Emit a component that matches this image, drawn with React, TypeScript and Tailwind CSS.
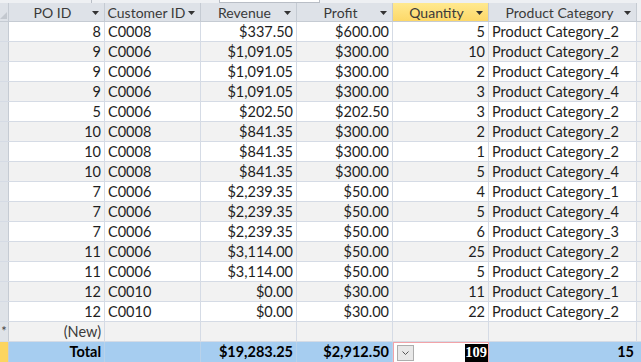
import React from "react";

const rows: [string, string, string, string, string, string][] = [
  ["8", "C0008", "$337.50", "$600.00", "5", "Product Category_2"],
  ["9", "C0006", "$1,091.05", "$300.00", "10", "Product Category_2"],
  ["9", "C0006", "$1,091.05", "$300.00", "2", "Product Category_4"],
  ["9", "C0006", "$1,091.05", "$300.00", "3", "Product Category_4"],
  ["5", "C0006", "$202.50", "$202.50", "3", "Product Category_2"],
  ["10", "C0008", "$841.35", "$300.00", "2", "Product Category_2"],
  ["10", "C0008", "$841.35", "$300.00", "1", "Product Category_2"],
  ["10", "C0008", "$841.35", "$300.00", "5", "Product Category_4"],
  ["7", "C0006", "$2,239.35", "$50.00", "4", "Product Category_1"],
  ["7", "C0006", "$2,239.35", "$50.00", "5", "Product Category_4"],
  ["7", "C0006", "$2,239.35", "$50.00", "6", "Product Category_3"],
  ["11", "C0006", "$3,114.00", "$50.00", "25", "Product Category_2"],
  ["11", "C0006", "$3,114.00", "$50.00", "5", "Product Category_2"],
  ["12", "C0010", "$0.00", "$30.00", "11", "Product Category_1"],
  ["12", "C0010", "$0.00", "$30.00", "22", "Product Category_2"],
];

const Arrow = () => (
  <svg width="7" height="4" viewBox="0 0 7 4" className="absolute right-[5px] top-[8px]">
    <path d="M0 0 H7 L3.5 4 Z" fill="#333" />
  </svg>
);

const headers = ["PO ID", "Customer ID", "Revenue", "Profit", "Quantity", "Product Category"];
const widths = ["w-[96px]", "w-[96px]", "w-[96px]", "w-[96px]", "w-[96px]", "w-[148px]"];

export default function App() {
  return (
    <div
      className="w-[641px] h-[362px] overflow-hidden bg-white text-[14.5px] leading-none text-[#1e1e1e]"
      style={{ fontFamily: "Lato, 'Open Sans', sans-serif" }}
    >
      {/* top strip */}
      <div className="h-[3px] flex bg-[#eef0f3]">
        <div className="w-[92px] border-r border-[#b9bec6]" />
        <div className="w-[128px] border-r border-[#b9bec6]" />
        <div className="w-[100px] bg-white border-r border-b border-[#b9bec6]" />
      </div>
      {/* header */}
      <div className="flex h-[19px] bg-[#dee2e8] border-b border-[#c5cbd3]">
        <div className="w-[9px] relative border-r border-[#c5cbd3]">
          <svg width="7" height="7" className="absolute right-[1px] bottom-[2px]" viewBox="0 0 7 7">
            <path d="M7 0 V7 H0 Z" fill="#c3c8cf" />
          </svg>
        </div>
        {headers.map((h, i) => (
          <div
            key={h}
            className={`${widths[i]} relative flex items-center justify-center border-r border-[#c5cbd3] text-[#3a3a3a] text-[14px] pt-[1px] ${
              i === 4 ? "bg-gradient-to-b from-[#ffe98f] to-[#fdd868]" : ""
            } ${i === 5 ? "pr-[6px]" : i === 1 ? "pr-[12px]" : "pr-[8px]"}`}
          >
            {h}
            <Arrow />
          </div>
        ))}
        <div className="flex-1 bg-[#eef0f3]" />
      </div>
      {rows.map((r, ri) => (
        <div
          key={ri}
          className={`flex h-[20px] border-b border-[#d5dbe5] ${ri % 2 === 1 ? "bg-[#f2f2f2]" : "bg-white"}`}
        >
          <div className="w-[9px] bg-[#dfe3e8] border-r border-[#c5cbd3]" />
          {r.map((c, ci) => (
            <div
              key={ci}
              className={`${widths[ci]} flex items-center pt-[1px] border-r border-[#d5dbe5] ${
                ci === 1 || ci === 5 ? "justify-start pl-[3px]" : "justify-end pr-[3px]"
              }`}
            >
              {c}
            </div>
          ))}
          <div className="flex-1 bg-[#f0f0f0]" />
        </div>
      ))}
      {/* new row */}
      <div className="flex h-[20px] border-b border-[#d5dbe5] bg-[#f2f2f2]">
        <div className="w-[9px] bg-[#dfe3e8] border-r border-[#c5cbd3] flex items-center justify-center text-[13px] text-[#444]">
          *
        </div>
        {widths.map((w, ci) => (
          <div
            key={ci}
            className={`${w} flex items-center pt-[1px] justify-end pr-[3px] border-r border-[#d5dbe5] text-[#3b3b3b]`}
          >
            {ci === 0 ? "(New)" : ""}
          </div>
        ))}
        <div className="flex-1 bg-[#f0f0f0]" />
      </div>
      {/* total row */}
      <div className="flex h-[20px] bg-[#a6cdf0] font-bold text-black">
        <div className="w-[9px] bg-[#fcd55f] border-r border-[#c5cbd3]" />
        <div className="w-[96px] flex items-center pt-[1px] justify-end pr-[3px] border-r border-[#b9d2ea]">Total</div>
        <div className="w-[96px] border-r border-[#b9d2ea]" />
        <div className="w-[96px] flex items-center pt-[1px] justify-end pr-[3px] border-r border-[#b9d2ea]">$19,283.25</div>
        <div className="w-[96px] flex items-center pt-[1px] justify-end pr-[3px] border-r border-[#b9d2ea]">$2,912.50</div>
        <div className="w-[96px] bg-white border border-[#f2a3a8] border-b-0 flex items-center pl-[3px] pr-0">
          <div className="w-[17px] h-[16px] bg-[#e8e8e8] border border-[#adadad] flex items-center justify-center">
            <svg width="7" height="4" viewBox="0 0 7 4">
              <path d="M0.5 0.5 L3.5 3.5 L6.5 0.5" stroke="#555" strokeWidth="1" fill="none" />
            </svg>
          </div>
          <div className="flex-1" />
          <span className="bg-black text-white h-[18px] flex items-center pr-[1px]" style={{ fontFamily: "'Liberation Serif', serif" }}>109</span>
        </div>
        <div className="w-[148px] flex items-center pt-[1px] justify-end pr-[3px]">15</div>
        <div className="flex-1" />
      </div>
    </div>
  );
}
